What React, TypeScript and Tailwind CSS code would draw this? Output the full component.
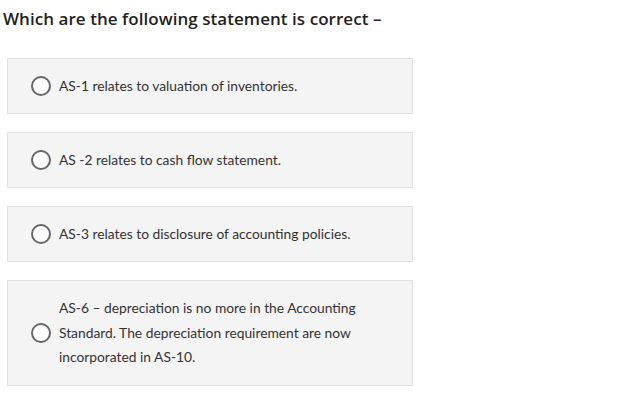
const options = [
    "AS-1 relates to valuation of inventories.",
    "AS -2 relates to cash flow statement.",
    "AS-3 relates to disclosure of accounting policies.",
    "AS-6 – depreciation is no more in the Accounting Standard. The depreciation requirement are now incorporated in AS-10.",
];

function Radio() {
    return (
        <span className="shrink-0 w-[20px] h-[20px] rounded-full border-2 border-[#666666] bg-white" />
    );
}

export default function App() {
    return (
        <div className="w-[623px] h-[400px] bg-white pl-[3px] pt-[7px]">

            <h1 className="text-[17px] leading-[24px] font-semibold text-[#1f1f1f] tracking-[0.05px] font-['Open_Sans',sans-serif]">
                Which are the following statement is correct –
            </h1>

            <div className="ml-[4px] mt-[27px] w-[406px] flex flex-col gap-[18px] font-['Lato',sans-serif]">

                {options.map((text, i) => (
                    <div
                        key={i}
                        className="min-h-[56px] flex items-center gap-[8px] pl-[23px] pr-[50px] py-[15px] bg-[#f4f4f4] border border-[#e2e2e2]"
                    >
                        <Radio />
                        <p className={i === 3 ? "text-[13.8px] leading-[24.5px] text-[#333333]" : "text-[13.8px] leading-[24px] text-[#333333]"}>
                            {text}
                        </p>
                    </div>
                ))}

            </div>

        </div>
    );
}
